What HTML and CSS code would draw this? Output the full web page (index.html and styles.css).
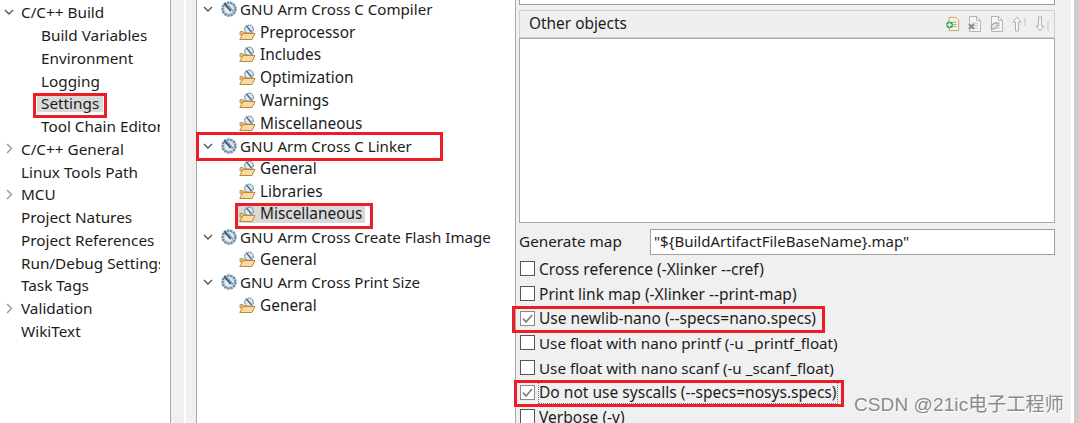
FILE: index.html
```html
<!DOCTYPE html>
<html lang="en">
<head>
<meta charset="utf-8">
<title>Settings</title>
<link rel="stylesheet" href="styles.css">
</head>
<body>
<svg class="defs" width="0" height="0" aria-hidden="true">
  <defs>
    <symbol id="down" viewBox="0 0 10 6"><path d="M1 1l4 4 4-4" fill="none" stroke="#555" stroke-width="1.4"/></symbol>
    <symbol id="right" viewBox="0 0 7 11"><path d="M1 1l4.500 4.500L1 10" fill="none" stroke="#a0a0a0" stroke-width="1.500"/></symbol>
    <symbol id="gear" viewBox="0 0 16 16">
      <circle cx="8" cy="8" r="6.500" fill="#cfdce6" stroke="#6f8ea8" stroke-width="2.400" stroke-dasharray="2.400 .7"/>
      <circle cx="8" cy="8" r="3.800" fill="#eef3f7"/>
      <path d="M3.200 2.200L10 10" stroke="#3f5f7c" stroke-width="2.200"/>
      <path d="M7.500 4.500l4.500 6" stroke="#8ba3b7" stroke-width="1.600"/>
    </symbol>
    <symbol id="folder" viewBox="0 0 17 17">
      <circle cx="10" cy="5.500" r="4.300" fill="#e6ecf2" stroke="#7d98ae" stroke-width="1.500" stroke-dasharray="1.600 .7"/>
      <path d="M7.500 2l5 6" stroke="#4f6d88" stroke-width="1.500"/>
      <path d="M1 7.500h3l1 1.500h8v2H1z" fill="#e9c178" stroke="#b98a3e" stroke-width=".8"/>
      <path d="M.8 15.500L4 9.500h12l-3 6z" fill="#f7dba0" stroke="#b98a3e" stroke-width="1"/>
    </symbol>
    <symbol id="page" viewBox="0 0 14 16"><path d="M1.500.5h7l4 4v11h-11z" fill="#f6f6f6" stroke="#b5b5b5"/><path d="M8.500.5v4h4" fill="none" stroke="#b5b5b5"/><path d="M4 7h6M4 9.500h6M4 12h6" stroke="#c4c4c4"/></symbol>
  </defs>
</svg>
<main class="window">
  <nav class="nav">
    <ul class="nav-list">
      <li class="row"><span class="twist"><svg class="down"><use href="#down"/></svg></span><span>C/C++ Build</span></li>
      <li class="row sub">Build Variables</li>
      <li class="row sub">Environment</li>
      <li class="row sub">Logging</li>
      <li class="row sub"><span class="selected nav-sel">Settings</span></li>
      <li class="row sub">Tool Chain Editor</li>
      <li class="row"><span class="twist"><svg class="right"><use href="#right"/></svg></span><span>C/C++ General</span></li>
      <li class="row top">Linux Tools Path</li>
      <li class="row"><span class="twist"><svg class="right"><use href="#right"/></svg></span><span>MCU</span></li>
      <li class="row top">Project Natures</li>
      <li class="row top">Project References</li>
      <li class="row top">Run/Debug Settings</li>
      <li class="row top">Task Tags</li>
      <li class="row"><span class="twist"><svg class="right"><use href="#right"/></svg></span><span>Validation</span></li>
      <li class="row top">WikiText</li>
    </ul>
  </nav>
  <div class="gutter"><div class="gutter-a"></div><div class="gutter-b"></div></div>
  <section class="tool-tree">
    <ul class="tree-list">
      <li class="row tool"><svg class="down"><use href="#down"/></svg><svg class="gear"><use href="#gear"/></svg><span>GNU Arm Cross C Compiler</span></li>
      <li class="row opt"><svg class="folder"><use href="#folder"/></svg><span>Preprocessor</span></li>
      <li class="row opt"><svg class="folder"><use href="#folder"/></svg><span>Includes</span></li>
      <li class="row opt"><svg class="folder"><use href="#folder"/></svg><span>Optimization</span></li>
      <li class="row opt"><svg class="folder"><use href="#folder"/></svg><span>Warnings</span></li>
      <li class="row opt"><svg class="folder"><use href="#folder"/></svg><span>Miscellaneous</span></li>
      <li class="row tool"><svg class="down"><use href="#down"/></svg><svg class="gear"><use href="#gear"/></svg><span>GNU Arm Cross C Linker</span></li>
      <li class="row opt"><svg class="folder"><use href="#folder"/></svg><span>General</span></li>
      <li class="row opt"><svg class="folder"><use href="#folder"/></svg><span>Libraries</span></li>
      <li class="row opt"><span class="selected tree-sel"><svg class="folder"><use href="#folder"/></svg><span>Miscellaneous</span></span></li>
      <li class="row tool"><svg class="down"><use href="#down"/></svg><svg class="gear"><use href="#gear"/></svg><span>GNU Arm Cross Create Flash Image</span></li>
      <li class="row opt"><svg class="folder"><use href="#folder"/></svg><span>General</span></li>
      <li class="row tool"><svg class="down"><use href="#down"/></svg><svg class="gear"><use href="#gear"/></svg><span>GNU Arm Cross Print Size</span></li>
      <li class="row opt"><svg class="folder"><use href="#folder"/></svg><span>General</span></li>
    </ul>
  </section>
  <section class="options">
    <div class="top-box"></div>
    <div class="objects">
      <header class="objects-head">
        <h2 class="objects-title">Other objects</h2>
        <div class="tools">
          <svg class="tool-icon" viewBox="0 0 16 16"><path d="M3.500.5h8l3 3v12h-11z" fill="#fbf3d0" stroke="#a9a27a"/><path d="M6 6h6M6 8.500h6M6 11h6" stroke="#7f9db8"/><circle cx="4" cy="9" r="3.800" fill="#3aa655"/><path d="M4 6.500v5M1.500 9h5" stroke="#fff" stroke-width="1.500"/></svg>
          <svg class="tool-icon" viewBox="0 0 14 16"><use href="#page"/><path d="M1 8l5 5M6 8l-5 5" stroke="#8a8a8a" stroke-width="2"/></svg>
          <svg class="tool-icon" viewBox="0 0 14 16"><use href="#page"/><path d="M1 10l3-3h4v3l-3 3H2z" fill="#e2e2e2" stroke="#9a9a9a"/></svg>
          <svg class="tool-icon arrow" viewBox="0 0 15 16"><path d="M5 1L1 6h2.500v9h3V6H9z" fill="#f8f8f8" stroke="#b0b0b0"/><path d="M13 2v8" stroke="#c2c2c2"/></svg>
          <svg class="tool-icon arrow" viewBox="0 0 15 16"><path d="M5 15L1 10h2.500V1h3v9H9z" fill="#f8f8f8" stroke="#b0b0b0"/><path d="M13 5v10" stroke="#c2c2c2"/></svg>
        </div>
      </header>
      <div class="objects-list"></div>
    </div>
    <div class="map-row">
      <label class="map-label" for="map">Generate map</label>
      <input class="map-input" id="map" type="text" value="&quot;${BuildArtifactFileBaseName}.map&quot;">
    </div>
    <ul class="checks">
      <li class="check"><span class="box"></span><span>Cross reference (-Xlinker --cref)</span></li>
      <li class="check"><span class="box"></span><span>Print link map (-Xlinker --print-map)</span></li>
      <li class="check"><span class="box on"><svg class="tick" viewBox="0 0 13 13"><path d="M2 6.500l3 3.500 6-7" fill="none" stroke="#777" stroke-width="1.500"/></svg></span><span>Use newlib-nano (--specs=nano.specs)</span></li>
      <li class="check narrow"><span class="box"></span><span>Use float with nano printf (-u _printf_float)</span></li>
      <li class="check narrow"><span class="box"></span><span>Use float with nano scanf (-u _scanf_float)</span></li>
      <li class="check"><span class="box on"><svg class="tick" viewBox="0 0 13 13"><path d="M2 6.500l3 3.500 6-7" fill="none" stroke="#777" stroke-width="1.500"/></svg></span><span class="focus">Do not use syscalls (--specs=nosys.specs)</span></li>
      <li class="check"><span class="box"></span><span>Verbose (-v)</span></li>
    </ul>
  </section>
  <div class="edge"></div>
  <div class="mark mark-settings"></div>
  <div class="mark mark-linker"></div>
  <div class="mark mark-misc"></div>
  <div class="mark mark-nano"></div>
  <div class="mark mark-sys"></div>
  <div class="watermark">CSDN @21ic电子工程师</div>
</main>
</body>
</html>
```
FILE: styles.css
```css
* { box-sizing: border-box; }
html, body { margin: 0; padding: 0; }
body { background: #fff; font-family: "Noto Sans", "Noto Sans CJK SC", sans-serif; font-size: 15px; color: #1c1c1c; }
ul { list-style: none; margin: 0; padding: 0; }
.defs { position: absolute; }
.window { position: relative; display: flex; width: 1079px; height: 423px; overflow: hidden; }

.row { display: flex; align-items: center; height: 22.75px; white-space: nowrap; }

.nav { width: 171px; flex: none; background: #fff; border-right: 1px solid #a8a8a8; }
.nav-list { width: 160px; padding-top: 1.1px; overflow: hidden; font-size: 15.3px; }
.top { padding-left: 21px; }
.sub { padding-left: 41px; }
.twist { display: flex; justify-content: center; width: 21px; padding-right: 3px; flex: none; }
.down { width: 10px; height: 6px; flex: none; }
.right { width: 7px; height: 11px; flex: none; }

.selected { background: #d9d9d9; line-height: 18px; }
.nav-sel { margin-left: -4px; padding: 0 4px; width: 66px; }
.tree-sel { display: flex; align-items: center; margin-left: -3px; padding-left: 3px; width: 129px; }

.gutter { display: flex; width: 26px; flex: none; border-right: 1px solid #a8a8a8; }
.gutter-a { width: 13px; background: #f0f0f0; }
.gutter-b { width: 2px; background: #fff; }
.gutter::after { content: ""; flex: 1; background: #f0f0f0; }

.tool-tree { width: 318px; flex: none; background: #fff; overflow: hidden; font-size: 15.4px; }
.tree-list { padding-top: 0.1px; margin-top: -2.2px; }
.tool { padding-left: 6px; font-size: 15.1px; }
.tool .down { margin-right: 8px; }
.gear { width: 16px; height: 16px; margin-right: 3px; flex: none; }
.opt { padding-left: 42px; }
.folder { width: 17px; height: 17px; margin-right: 4px; flex: none; }

.options { width: 556px; flex: none; padding: 0 16px 0 3px; background: #f0f0f0; border-left: 1px solid #a8a8a8; }
.top-box { height: 5px; margin-bottom: 5px; background: #fff; border: 1px solid #a0a0a0; border-top: 0; }
.objects { height: 213px; display: flex; flex-direction: column; }
.objects-head { display: flex; align-items: center; justify-content: space-between; height: 28px; padding-left: 9px; background: #efefef; border: 1px solid #cfcfcf; }
.objects-title { margin: 0 0 2px; font-size: 15.4px; font-weight: 400; }
.tools { display: flex; gap: 8px; padding-right: 4px; }
.tool-icon { width: 14px; height: 16px; }
.arrow { width: 15px; }
.objects-list { flex: 1; background: #fff; border: 1px solid #a9a9a9; }

.map-row { display: flex; align-items: center; height: 26px; margin-top: 6px; }
.map-label { width: 131px; flex: none; padding-bottom: 2px; font-size: 15.3px; }
.map-input { width: 406px; height: 26px; padding: 0 3px 2px; font: inherit; color: inherit; background: #fff; border: 1px solid #a0a0a0; border-radius: 0; outline: 0; }

.checks { margin-top: 1.5px; font-size: 15.55px; }
.check { display: flex; align-items: center; gap: 4px; height: 24.7px; padding-left: 1px; white-space: nowrap; }
.narrow { font-size: 15.2px; }
.box { display: flex; align-items: center; justify-content: center; width: 15px; height: 15px; flex: none; background: #fff; border: 1px solid #555; }
.box.on { border-color: #8a8a8a; }
.tick { width: 13px; height: 13px; }
.focus { outline: 1px dotted #777; outline-offset: 0; padding-right: 1px; }

.edge { width: 8px; flex: none; background: #fff; border-left: 2px solid #fff; box-shadow: inset -5px 0 0 #cdcdcd; }

.mark { position: absolute; border: 3px solid #ee1c25; }
.mark-settings { left: 33px; top: 93px; width: 74px; height: 25px; }
.mark-linker { left: 196px; top: 132px; width: 247px; height: 29px; }
.mark-misc { left: 235px; top: 203px; width: 138px; height: 26px; }
.mark-nano { left: 512px; top: 306px; width: 313px; height: 27px; }
.mark-sys { left: 514px; top: 380px; width: 330px; height: 27px; }

.watermark { position: absolute; left: 854px; top: 393px; font-family: "Liberation Sans", "Noto Sans CJK SC", sans-serif; font-size: 19px; line-height: 24px; letter-spacing: .1px; color: #8a8a8a; white-space: nowrap; text-shadow: 1px 1px 0 #fff; }
```
